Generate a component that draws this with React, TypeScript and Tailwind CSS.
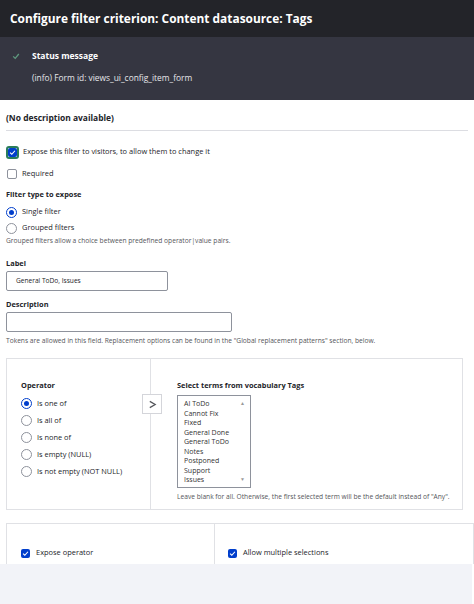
import React from "react";

const font = { fontFamily: '"Open Sans", "Noto Sans", sans-serif' };

function Check({ focus = false }: { focus?: boolean }) {
  const box = (
    <span className="flex h-[9px] w-[9px] items-center justify-center rounded-[2px] bg-[#003ecc]">
      <svg viewBox="0 0 10 10" className="h-[7px] w-[7px]">
        <path d="M1.5 5.2 L4 7.5 L8.5 2.5" fill="none" stroke="white" strokeWidth="1.6" />
      </svg>
    </span>
  );
  if (!focus) return box;
  return (
    <span className="flex h-[13px] w-[13px] items-center justify-center rounded-[3px] border-2 border-[#2a7d5b] bg-white">
      {box}
    </span>
  );
}

function Box() {
  return <span className="block h-[10px] w-[10px] rounded-[2px] border border-[#8e929c] bg-white" />;
}

function Radio({ on = false }: { on?: boolean }) {
  return on ? (
    <span className="flex h-[11px] w-[11px] items-center justify-center rounded-full border-[1.5px] border-[#003ecc] bg-white">
      <span className="block h-[5px] w-[5px] rounded-full bg-[#003ecc]" />
    </span>
  ) : (
    <span className="block h-[11px] w-[11px] rounded-full border border-[#8e929c] bg-white" />
  );
}

const terms = ["AI ToDo", "Cannot Fix", "Fixed", "General Done", "General ToDo", "Notes", "Postponed", "Support", "Issues"];
const ops = ["Is one of", "Is all of", "Is none of", "Is empty (NULL)", "Is not empty (NOT NULL)"];

export default function App() {
  return (
    <div className="h-[604px] w-[474px] overflow-hidden bg-white text-[#232429]" style={font}>
      <div className="flex h-[37px] items-center bg-[#232429] px-[10px]">
        <h1 className="pt-[1px] text-[11.9px] font-bold text-white">Configure filter criterion: Content datasource: Tags</h1>
      </div>
      <div className="flex h-[63px] flex-col bg-[#353641] pl-[12px] text-white">
        <div className="mt-[12px] flex h-[14px] items-center">
          <svg viewBox="0 0 10 10" className="h-[8px] w-[8px]">
            <path d="M1.5 5.5 L4 8 L8.5 2.5" fill="none" stroke="#5f9a7f" strokeWidth="1.6" />
          </svg>
          <span className="ml-[12px] text-[8.5px] font-bold">Status message</span>
        </div>
        <div className="ml-[20px] mt-[8px] flex h-[14px] items-center text-[8.4px] text-[#e6e6ea]">
          (info) Form id: views_ui_config_item_form
        </div>
      </div>

      <div className="h-[464px] overflow-hidden px-[6px]">
        <div className="flex h-[31px] items-center border-b border-[#dcdde2] pt-[6px] text-[8.45px] font-bold">
          (No description available)
        </div>
        <div className="mt-[10px] flex h-[22px] items-center">
          <Check focus />
          <span className="ml-[4px] text-[7.45px]">Expose this filter to visitors, to allow them to change it</span>
        </div>
        <div className="flex h-[22px] items-center pl-[1px]">
          <Box />
          <span className="ml-[5px] text-[7.45px]">Required</span>
        </div>
        <div className="flex h-[19px] items-center text-[7.4px] font-bold">Filter type to expose</div>
        <div className="flex h-[16px] items-center">
          <Radio on />
          <span className="ml-[5px] text-[7.45px]">Single filter</span>
        </div>
        <div className="flex h-[16px] items-center">
          <Radio />
          <span className="ml-[5px] text-[7.45px]">Grouped filters</span>
        </div>
        <div className="flex h-[10px] items-center text-[6.67px] text-[#55565b]">
          Grouped filters allow a choice between predefined operator|value pairs.
        </div>
        <div className="mt-[11px] flex h-[14px] items-center text-[7.4px] font-bold">Label</div>
        <div className="flex h-[20px] w-[162px] items-center rounded-[2px] border border-[#8e929c] px-[9px] text-[6.6px]">
          General ToDo, Issues
        </div>
        <div className="mt-[7px] flex h-[14px] items-center text-[7.4px] font-bold">Description</div>
        <div className="h-[20px] w-[226px] rounded-[2px] border border-[#8e929c]" />
        <div className="mt-[3px] flex h-[12px] items-center whitespace-nowrap text-[6.65px] text-[#55565b]">
          Tokens are allowed in this field. Replacement options can be found in the "Global replacement patterns" section, below.
        </div>

        <div className="relative mt-[11px] flex h-[152px] w-[457px] border border-[#e0e1e5]">
          <div className="w-[144px] border-r border-[#e0e1e5] pl-[14px] pt-[20px]">
            <div className="flex h-[14px] items-center text-[7.4px] font-bold">Operator</div>
            <div className="mt-[2px] flex flex-col">
              {ops.map((o, i) => (
                <div key={o} className="flex h-[17px] items-center">
                  <Radio on={i === 0} />
                  <span className="ml-[5px] text-[7.4px]">{o}</span>
                </div>
              ))}
            </div>
          </div>
          <div className="absolute left-[135px] top-[35px] flex h-[20px] w-[20px] items-center justify-center border border-[#d4d5da] bg-white">
            <svg viewBox="0 0 10 10" className="h-[9px] w-[9px]">
              <path d="M2 1.5 L8 5 L2 8.5" fill="none" stroke="#55565b" strokeWidth="1.4" />
            </svg>
          </div>
          <div className="flex-1 pl-[26px] pt-[20px]">
            <div className="flex h-[14px] items-center text-[7.4px] font-bold">Select terms from vocabulary Tags</div>
            <div className="relative mt-[2px] h-[93px] w-[74px] border border-[#8e929c] pl-[6px] pt-[3px]">
              {terms.map((t) => (
                <div key={t} className="flex h-[9.5px] items-center text-[7px] leading-none text-[#333]">
                  {t}
                </div>
              ))}
              <span className="absolute right-[5px] top-[4px] text-[5px] text-[#999]">▲</span>
              <span className="absolute bottom-[4px] right-[5px] text-[5px] text-[#999]">▼</span>
            </div>
            <div className="mt-[3px] flex h-[12px] items-center whitespace-nowrap text-[6.65px] text-[#55565b]">
              Leave blank for all. Otherwise, the first selected term will be the default instead of "Any".
            </div>
          </div>
        </div>

        <div className="mt-[13px] flex h-[80px] w-[468px] border border-[#e0e1e5]">
          <div className="w-[208px] border-r border-[#e0e1e5] pl-[14px] pt-[22px]">
            <div className="flex h-[14px] items-center">
              <Check />
              <span className="ml-[6px] text-[7.45px]">Expose operator</span>
            </div>
          </div>
          <div className="flex-1 pl-[13px] pt-[22px]">
            <div className="flex h-[14px] items-center">
              <Check />
              <span className="ml-[6px] text-[7.45px]">Allow multiple selections</span>
            </div>
          </div>
        </div>
      </div>
      <div className="h-[40px] w-[472px] bg-[#f2f3f8]" />
    </div>
  );
}
